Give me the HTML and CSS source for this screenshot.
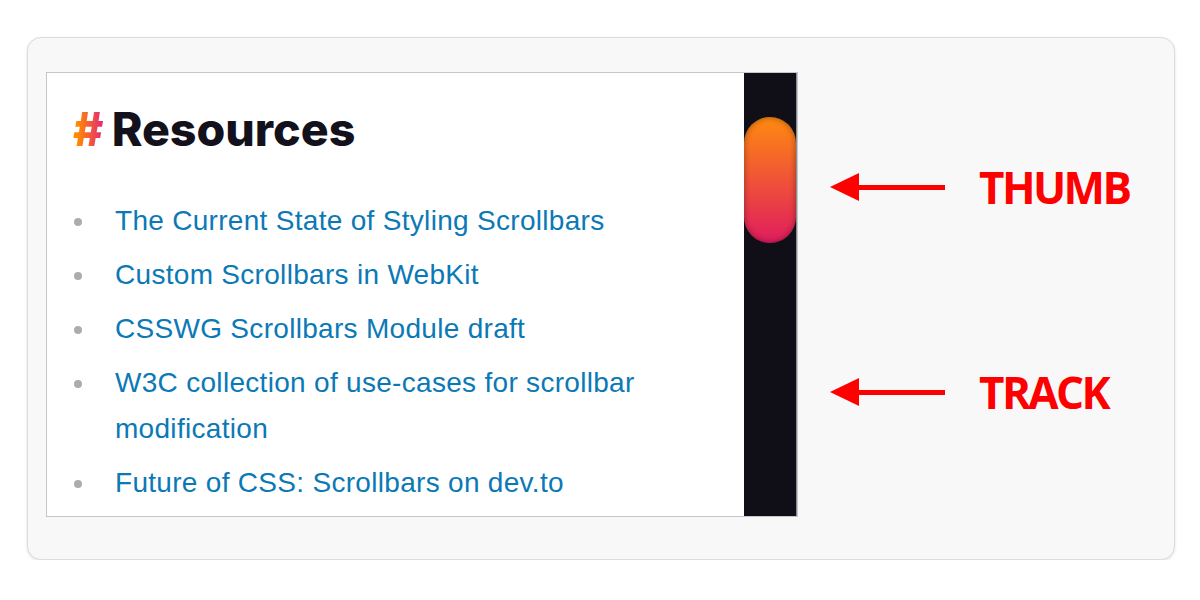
FILE: index.html
```html
<!DOCTYPE html>
<html lang="en">
  <head>
    <meta charset="UTF-8" />
    <meta name="viewport" content="width=device-width, initial-scale=1.0" />
    <title>Custom scrollbar</title>
    <link rel="stylesheet" href="styles.css">
  </head>
  <body>
    <div class="card">
      <div class="demo">
        <div class="content">
          <h2 class="title"><span class="hash">#</span> Resources</h2>
          <ul class="links">
            <li class="item"><a href="#">The Current State of Styling Scrollbars</a></li>
            <li class="item"><a href="#">Custom Scrollbars in WebKit</a></li>
            <li class="item"><a href="#">CSSWG Scrollbars Module draft</a></li>
            <li class="item"><a href="#">W3C collection of use-cases for scrollbar modification</a></li>
            <li class="item"><a href="#">Future of CSS: Scrollbars on dev.to</a></li>
          </ul>
        </div>
        <div class="track">
          <div class="thumb"></div>
        </div>
      </div>
      <div class="notes">
        <div class="note">
          <svg class="arrow" width="116" height="30" viewBox="0 0 116 30">
            <polygon points="0,15 29,1 29,29" fill="#ff0000" />
            <rect x="26" y="13" width="89" height="5" fill="#ff0000" />
          </svg>
          <span class="label">THUMB</span>
        </div>
        <div class="note">
          <svg class="arrow" width="116" height="30" viewBox="0 0 116 30">
            <polygon points="0,15 29,1 29,29" fill="#ff0000" />
            <rect x="26" y="13" width="89" height="5" fill="#ff0000" />
          </svg>
          <span class="label">TRACK</span>
        </div>
      </div>
    </div>
  </body>
</html>
```

FILE: styles.css
```css
* {
  padding: 0;
  margin: 0;
  box-sizing: border-box;
}
body {
  background: #fff;
  padding: 37px 0 0 27px;
}
.card {
  width: 1148px;
  height: 523px;
  background: #f8f8f8;
  border: 1px solid #dcdcdc;
  border-radius: 14px;
  box-shadow: 0 1px 3px rgba(0, 0, 0, 0.12);
  padding: 34px 0 0 18px;
  display: flex;
  align-items: flex-start;
}
.demo {
  width: 752px;
  height: 445px;
  border: 1px solid #c6c6c6;
  display: flex;
  background: #fff;
}
.content {
  flex: 1;
  padding: 30px 20px 0 26px;
  overflow: hidden;
}
.title {
  font-family: Inter, 'Liberation Sans', sans-serif;
  font-weight: 800;
  font-size: 46.5px;
  line-height: 52px;
  color: #13121c;
  word-spacing: -2px;
}
.hash {
  background: linear-gradient(to right, #ff8a00 15%, #e52e71 95%);
  -webkit-background-clip: text;
  background-clip: text;
  color: transparent;
}
.links {
  list-style: none;
  margin-top: 43px;
  display: flex;
  flex-direction: column;
  gap: 8px;
}
.item {
  display: flex;
  align-items: flex-start;
  font-family: 'Liberation Sans', Arial, sans-serif;
  font-size: 28px;
  line-height: 46px;
  letter-spacing: 0.3px;
}
.item::before {
  content: '';
  flex: none;
  width: 8px;
  height: 8px;
  border-radius: 50%;
  background: #acacac;
  margin: 20px 33px 0 1px;
}
.item a {
  color: #0b79b6;
  text-decoration: none;
}
.track {
  width: 53px;
  background: #100e17;
  border-right: 1px solid #8d8d94;
}
.thumb {
  margin-top: 44px;
  height: 126px;
  border-radius: 26px;
  background: linear-gradient(to bottom, #ff8a10, #e01c5e);
  box-shadow: inset 0 0 6px rgba(0, 0, 0, 0.4);
}
.notes {
  margin: 93px 0 0 32px;
  display: flex;
  flex-direction: column;
  gap: 161px;
}
.note {
  height: 44px;
  display: flex;
  align-items: center;
}
.arrow {
  flex: none;
}
.label {
  margin-left: 33px;
  font-family: 'Open Sans', 'Liberation Sans', sans-serif;
  font-weight: 700;
  font-size: 44px;
  letter-spacing: -2.6px;
  color: #ff0000;
}
```
